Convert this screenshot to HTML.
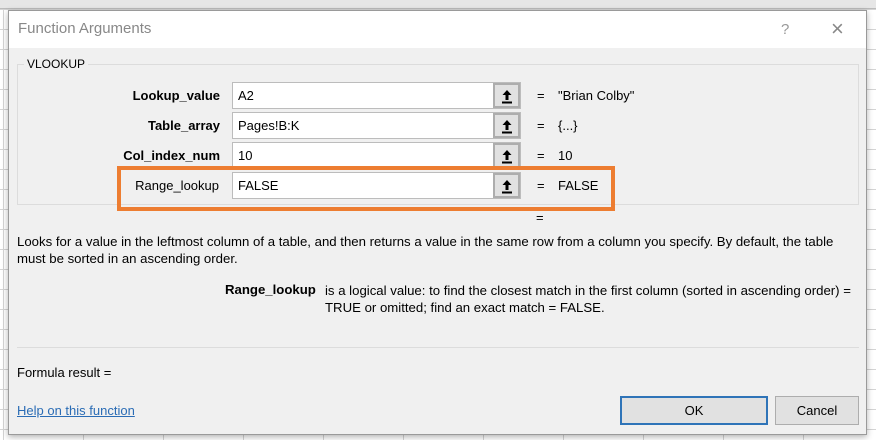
<!DOCTYPE html>
<html><head><meta charset="utf-8"><style>
*{margin:0;padding:0;box-sizing:border-box}
body{width:876px;height:440px;overflow:hidden;background:#fff;font-family:"Liberation Sans",sans-serif;font-size:13px;color:#000;position:relative}
.a{position:absolute;white-space:nowrap}
.grid{position:absolute;left:0;top:0;width:876px;height:440px;
background-image:linear-gradient(90deg,#d4d4d4 1px,transparent 1px),linear-gradient(#d4d4d4 1px,transparent 1px);
background-size:80px 20px;background-position:3px 0,0 9px}
.hdr{position:absolute;left:0;top:0;width:876px;height:9px;background:#e6e6e6;border-bottom:1px solid #bbb}
.dlg{position:absolute;left:8px;top:10px;width:859px;height:425px;background:#f0f0f0;border:1px solid #9a9a9a;box-shadow:0 2px 6px rgba(0,0,0,.3)}
.title{position:absolute;left:0;top:0;width:100%;height:37px;background:#fff}
.inp{position:absolute;left:232px;width:289px;height:27px;background:#fff;border:1px solid #bcbcbc;padding:5px 0 0 5px}
.btn{position:absolute;right:0;top:0;width:27px;height:25px;background:#e1e1e1;border:2px solid #adadad}
.btn svg{position:absolute;left:6px;top:4px}
.lbl{position:absolute;right:656px;font-weight:bold;font-size:13px}
</style></head><body>
<div class="grid"></div>
<div class="hdr"></div>
<div class="dlg">
 <div class="title"></div>
 <div class="a" style="left:9px;top:9px;font-size:15px;color:#888">Function Arguments</div>
 <div class="a" style="left:772px;top:10px;font-size:15px;color:#999">?</div>
 <div class="a" style="left:822px;top:5px;font-size:22px;color:#888;font-weight:300">×</div>
</div>
<div class="a" style="left:17px;top:64px;width:842px;height:141px;border:1px solid #dcdcdc"></div>
<div class="a" style="left:24px;top:57px;background:#f0f0f0;padding:0 3px;font-size:12px">VLOOKUP</div>

<div class="lbl" style="top:88px">Lookup_value</div>
<div class="lbl" style="top:118px">Table_array</div>
<div class="lbl" style="top:148px">Col_index_num</div>
<div class="lbl" style="top:178px;font-weight:normal;right:657px">Range_lookup</div>

<div class="inp" style="top:82px">A2<div class="btn"><svg width="12" height="15" viewBox="0 0 12 15"><path d="M6 1L1.5 6H4.5V11H7.5V6H10.5Z" fill="#000"/><rect x="1" y="12.5" width="10" height="2" fill="#000"/></svg></div></div>
<div class="inp" style="top:112px">Pages!B:K<div class="btn"><svg width="12" height="15" viewBox="0 0 12 15"><path d="M6 1L1.5 6H4.5V11H7.5V6H10.5Z" fill="#000"/><rect x="1" y="12.5" width="10" height="2" fill="#000"/></svg></div></div>
<div class="inp" style="top:142px">10<div class="btn"><svg width="12" height="15" viewBox="0 0 12 15"><path d="M6 1L1.5 6H4.5V11H7.5V6H10.5Z" fill="#000"/><rect x="1" y="12.5" width="10" height="2" fill="#000"/></svg></div></div>
<div class="inp" style="top:172px">FALSE<div class="btn"><svg width="12" height="15" viewBox="0 0 12 15"><path d="M6 1L1.5 6H4.5V11H7.5V6H10.5Z" fill="#000"/><rect x="1" y="12.5" width="10" height="2" fill="#000"/></svg></div></div>

<div class="a" style="left:537px;top:88px">=</div><div class="a" style="left:558px;top:88px">"Brian Colby"</div>
<div class="a" style="left:537px;top:118px">=</div><div class="a" style="left:558px;top:118px">{...}</div>
<div class="a" style="left:537px;top:148px">=</div><div class="a" style="left:558px;top:148px">10</div>
<div class="a" style="left:537px;top:178px">=</div><div class="a" style="left:558px;top:178px">FALSE</div>
<div class="a" style="left:536px;top:210px">=</div>

<div class="a" style="left:117px;top:166px;width:498px;height:45px;border:4px solid #ED7D31"></div>

<div class="a" style="left:17px;top:233px;line-height:17px;font-size:13.2px">Looks for a value in the leftmost column of a table, and then returns a value in the same row from a column you specify. By default, the table<br>must be sorted in an ascending order.</div>
<div class="a" style="left:225px;top:282px;font-weight:bold;font-size:13.2px">Range_lookup</div>
<div class="a" style="left:325px;top:282px;line-height:17px;font-size:13.2px">is a logical value: to find the closest match in the first column (sorted in ascending order) =<br>TRUE or omitted; find an exact match = FALSE.</div>

<div class="a" style="left:17px;top:347px;width:842px;height:1px;background:#dcdcdc"></div>
<div class="a" style="left:17px;top:365px">Formula result =</div>
<div class="a" style="left:17px;top:403px;color:#2a6cb5;text-decoration:underline">Help on this function</div>
<div class="a" style="left:620px;top:396px;width:148px;height:29px;background:#e1e1e1;border:2px solid #2f74b8;text-align:center;line-height:25px">OK</div>
<div class="a" style="left:775px;top:396px;width:84px;height:29px;background:#e1e1e1;border:1px solid #adadad;text-align:center;line-height:27px">Cancel</div>
</body></html>
